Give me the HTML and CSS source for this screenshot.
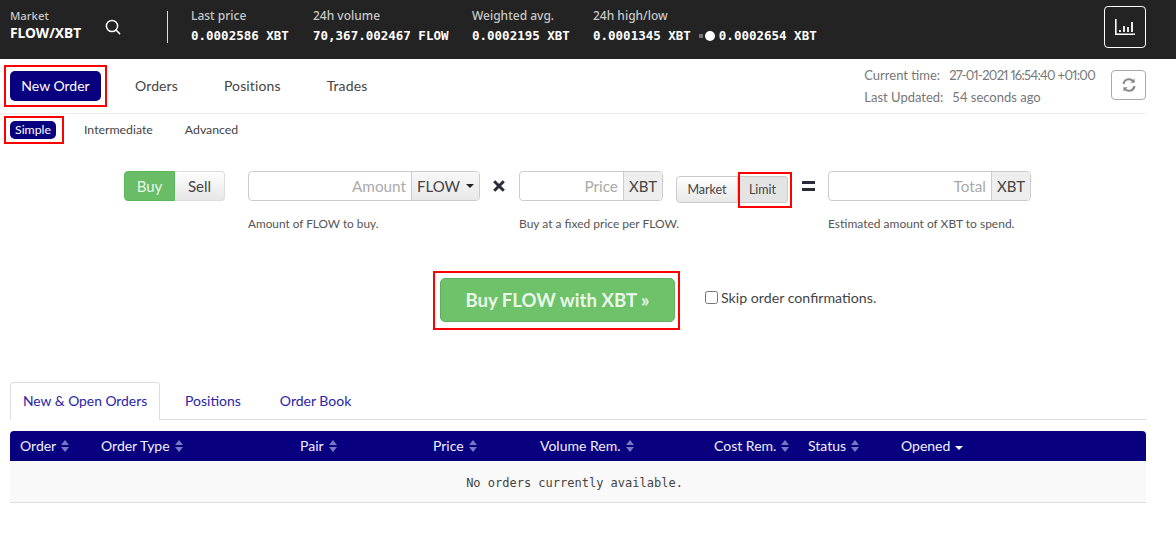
FILE: index.html
```html
<!DOCTYPE html>
<html lang="en">
<head>
<meta charset="utf-8">
<title>FLOW/XBT</title>
<link rel="stylesheet" href="styles.css">
</head>
<body>
<header class="market-bar">
  <div class="stat market-stat">
    <span class="stat-label market-label">Market</span>
    <span class="market-name">FLOW/XBT</span>
  </div>
  <svg class="search-icon" width="16" height="16" viewBox="0 0 16 16" fill="none" stroke="#fff" stroke-width="1.5"><circle cx="7" cy="7" r="5.6"/><path d="M11 11l3.6 3.6" stroke-linecap="round"/></svg>
  <div class="bar-divider"></div>
  <div class="stat w-last"><span class="stat-label">Last price</span><span class="stat-value">0.0002586 XBT</span></div>
  <div class="stat w-volume"><span class="stat-label">24h volume</span><span class="stat-value">70,367.002467 FLOW</span></div>
  <div class="stat w-avg"><span class="stat-label">Weighted avg.</span><span class="stat-value">0.0002195 XBT</span></div>
  <div class="stat"><span class="stat-label">24h high/low</span>
    <span class="stat-value range">0.0001345 XBT<i class="range-track"></i><i class="range-dot"></i>0.0002654 XBT</span>
  </div>
  <button class="chart-btn" aria-label="Chart">
    <svg width="20" height="16" viewBox="0 0 20 16" fill="none" stroke="#fff"><path d="M0.8 0v15.2H20" stroke-width="1.6"/><path d="M5 13v-2M9 13v-6M13 13v-5M17 13v-10" stroke-width="1.8"/></svg>
  </button>
</header>

<nav class="main-nav">
  <a class="main-tab active marked">New Order</a>
  <a class="main-tab">Orders</a>
  <a class="main-tab">Positions</a>
  <a class="main-tab">Trades</a>
  <div class="times">
    <div class="time-line"><span>Current time:</span><span class="time-value">27-01-2021 16:54:40 +01:00</span></div>
    <div class="time-line"><span>Last Updated:</span><span>54 seconds ago</span></div>
  </div>
  <button class="refresh-btn" aria-label="Refresh">
    <svg width="14" height="14" viewBox="0 0 14 14" fill="none" stroke="#888" stroke-width="2"><path d="M1.5 6A5.5 5.5 0 0 1 11.2 3.2"/><path d="M12.5 8A5.5 5.5 0 0 1 2.8 10.8"/><path d="M12.6 0.6v4.2H8.4z" fill="#888" stroke="none"/><path d="M1.4 13.4V9.2h4.2z" fill="#888" stroke="none"/></svg>
  </button>
</nav>

<div class="sub-nav">
  <a class="sub-tab active marked-sm">Simple</a>
  <a class="sub-tab">Intermediate</a>
  <a class="sub-tab">Advanced</a>
</div>

<section class="order-form">
  <div class="field-side">
    <div class="seg">
      <span class="seg-btn buy">Buy</span><span class="seg-btn sell">Sell</span>
    </div>
  </div>
  <div class="field f-amount">
    <div class="input-group"><span class="input">Amount</span><span class="addon dropdown">FLOW<i class="caret"></i></span></div>
    <p class="help">Amount of FLOW to buy.</p>
  </div>
  <svg class="times-op" width="12" height="12" viewBox="0 0 12 12" stroke="#2a2a3a" stroke-width="3"><path d="M1.2 1.2l9.6 9.6M10.8 1.2l-9.6 9.6"/></svg>
  <div class="field f-price">
    <div class="input-group"><span class="input">Price</span><span class="addon">XBT</span></div>
    <p class="help">Buy at a fixed price per FLOW.</p>
  </div>
  <div class="seg order-kind">
    <span class="kind-btn">Market</span><span class="kind-btn on">Limit</span>
  </div>
  <div class="equals"></div>
  <div class="field f-total">
    <div class="input-group"><span class="input">Total</span><span class="addon">XBT</span></div>
    <p class="help">Estimated amount of XBT to spend.</p>
  </div>
</section>

<section class="submit-row">
  <button class="submit-btn">Buy FLOW with XBT »</button>
  <label class="skip"><input type="checkbox">Skip order confirmations.</label>
</section>

<section class="orders">
  <div class="tabs">
    <a class="tab active">New &amp; Open Orders</a>
    <a class="tab">Positions</a>
    <a class="tab">Order Book</a>
  </div>
  <div class="grid-table">
    <div class="thead">
      <span class="th">Order<i class="sort"></i></span>
      <span class="th">Order Type<i class="sort"></i></span>
      <span class="th">Pair<i class="sort"></i></span>
      <span class="th">Price<i class="sort"></i></span>
      <span class="th">Volume Rem.<i class="sort"></i></span>
      <span class="th">Cost Rem.<i class="sort"></i></span>
      <span class="th">Status<i class="sort"></i></span>
      <span class="th">Opened<i class="sort-down"></i></span>
    </div>
    <div class="empty-row">No orders currently available.</div>
  </div>
</section>
</body>
</html>
```

FILE: styles.css
```css
* { box-sizing: border-box; }
html, body { margin: 0; padding: 0; }
body {
  width: 1176px;
  height: 539px;
  overflow: hidden;
  background: #fff;
  color: #333;
  font-family: "Lato", "Liberation Sans", sans-serif;
  font-size: 14px;
}
a { display: block; }
button { font-family: inherit; padding: 0; cursor: pointer; }

/* Market bar */
.market-bar {
  height: 59px;
  background: #232323;
  color: #fff;
  display: flex;
  align-items: flex-start;
  padding: 9px 30px 0 10px;
}
.stat { display: flex; flex-direction: column; gap: 5px; }
.stat-label {
  font-family: "Noto Sans", sans-serif;
  font-size: 12px;
  line-height: 14px;
  font-weight: 500;
  color: #c8c8c8;
}
.market-stat { width: 95px; gap: 2px; }
.market-label { font-size: 11.3px; }
.market-name { font-family: "Noto Sans", sans-serif; font-weight: 700; font-size: 13.8px; line-height: 16px; }
.stat-value {
  font-family: "DejaVu Sans Mono", monospace;
  font-weight: 700;
  font-size: 12.5px;
  line-height: 16px;
  white-space: pre;
}
.search-icon { flex: none; margin-top: 10px; }
.bar-divider { width: 1px; height: 32px; background: #ddd; margin: 2px 23px 0 46px; flex: none; }
.w-last { width: 122px; }
.w-volume { width: 159px; }
.w-avg { width: 121px; }
.range { display: flex; align-items: center; }
.range-track { width: 4px; height: 4px; background: #777; margin: 0 2px 0 8px; }
.range-dot { width: 10px; height: 10px; border-radius: 50%; background: #fff; margin-right: 4px; }
.chart-btn {
  margin: -3px 0 0 auto;
  width: 42px;
  height: 42px;
  background: transparent;
  border: 1px solid #fff;
  border-radius: 4px;
  display: flex;
  align-items: center;
  justify-content: center;
}

/* Main nav */
.main-nav {
  width: 1146px;
  height: 55px;
  border-bottom: 1px solid #ececf4;
  display: flex;
  align-items: center;
  padding: 0 0 0 10px;
}
.main-tab { font-size: 14px; letter-spacing: 0.12px; color: #444; margin-right: 46px; line-height: 30px; }
.main-tab.active {
  width: 91px;
  height: 30px;
  text-align: center;
  background: #08007f;
  color: #fff;
  border-radius: 5px;
  margin-right: 34px;
  letter-spacing: 0;
}
.marked, .marked-sm, .kind-btn.on, .submit-btn { position: relative; }
.marked::after, .marked-sm::after, .kind-btn.on::after, .submit-btn::after {
  content: "";
  position: absolute;
  border: 2px solid #f00;
  pointer-events: none;
}
.marked::after { inset: -6px; }
.times { margin-left: auto; display: flex; flex-direction: column; gap: 5px; }
.time-line { display: flex; gap: 9px; font-size: 13px; line-height: 17px; color: #777; }
.time-value { font-variant-numeric: proportional-nums; letter-spacing: -0.7px; }
.refresh-btn {
  width: 35px;
  height: 30px;
  margin-left: 16px;
  margin-top: -2px;
  background: #fff;
  border: 1px solid #aaa;
  border-radius: 4px;
  display: flex;
  align-items: center;
  justify-content: center;
}

/* Sub nav */
.sub-nav {
  display: flex;
  align-items: center;
  padding: 7px 0 0 10px;
  height: 25px;
}
.sub-tab { font-size: 12.3px; color: #444; line-height: 18px; margin-right: 32px; }
.sub-tab.active { background: #08007f; color: #fff; width: 46px; text-align: center; border-radius: 5px; margin-right: 28px; }
.marked-sm::after { inset: -5px -8px -5px -6px; }

/* Order form */
.order-form {
  display: flex;
  align-items: flex-start;
  margin-top: 32px;
  padding-left: 124px;
  height: 61px;
}
.field-side { width: 124px; }
.seg { display: flex; }
.seg-btn {
  height: 30px;
  line-height: 28px;
  text-align: center;
  font-size: 15px;
  border: 1px solid #ddd;
}
.buy { width: 51px; background: #68bd66; border-color: #5cb85c; color: #e9f6e8; border-radius: 4px 0 0 4px; }
.sell { width: 50px; background: linear-gradient(#fff, #e6e6e6); border-left: 0; color: #444; border-radius: 0 4px 4px 0; }
.field { flex: none; }
.f-amount { width: 232px; }
.f-price { width: 144px; }
.f-total { width: 203px; }
.input-group {
  display: flex;
  height: 30px;
  border: 1px solid #ccc;
  border-radius: 4px;
  overflow: hidden;
}
.input {
  flex: 1;
  text-align: right;
  padding-right: 5px;
  font-size: 15.3px;
  line-height: 28px;
  color: #aaa;
}
.addon {
  background: #eee;
  border-left: 1px solid #ccc;
  padding: 0 5px;
  font-size: 15px;
  line-height: 28px;
  color: #444;
}
.dropdown { display: flex; align-items: center; gap: 6px; width: 68px; background: linear-gradient(#f8f8f8, #e8e8e8); }
.caret { width: 0; height: 0; border: 4px solid transparent; border-top-color: #222; border-bottom: 0; }
.help { margin: 15px 0 0; font-size: 12px; line-height: 16px; color: #555; white-space: nowrap; }
.f-amount .help { font-size: 11.8px; }
.times-op { flex: none; margin: 9px 14px 0 13px; }
.order-kind { margin: 5px 0 0 13px; flex: none; }
.kind-btn {
  height: 27px;
  line-height: 25px;
  font-size: 12.5px;
  text-align: center;
  color: #444;
  border: 1px solid #ccc;
}
.kind-btn:first-child { width: 62px; border-radius: 4px 0 0 4px; background: linear-gradient(#fff, #e8e8e8); }
.kind-btn.on { width: 50px; border-radius: 0 4px 4px 0; border-left: 0; background: #e4e4e4; }
.kind-btn.on::after { inset: -5px -5px -6px 0; }
.equals { flex: none; width: 13px; height: 10px; border-top: 3px solid #2a2a3a; border-bottom: 3px solid #2a2a3a; margin: 10px 13px 0 14px; }

/* Submit */
.submit-row { display: flex; align-items: center; margin-top: 45px; padding-left: 440px; height: 46px; }
.submit-btn {
  width: 235px;
  height: 44px;
  background: #6dc26a;
  border: 1px solid #62ad60;
  border-radius: 5px;
  color: #eaf7e9;
  font-size: 18.6px;
  font-weight: 700;
}
.submit-btn::after { inset: -8px -6px -9px -8px; }
.skip { display: flex; align-items: center; margin: -6px 0 0 30px; font-size: 14.2px; color: #444; }
.skip input { margin: 0 3px 0 0; width: 13px; height: 13px; }

/* Orders */
.orders { margin: 59px 30px 0 10px; }
.tabs { display: flex; height: 38px; border-bottom: 1px solid #ddd; }
.tab { padding: 0 13px; line-height: 37px; font-size: 14px; color: #2a24a8; margin-right: 13px; }
.tab.active {
  width: 150px;
  height: 38px;
  padding: 0 12px;
  margin-right: 12px;
  border: 1px solid #ddd;
  border-bottom: 0;
  border-radius: 4px 4px 0 0;
  background: #fff;
  font-size: 13.85px;
  line-height: 36px;
  white-space: nowrap;
}
.grid-table { margin-top: 11px; }
.thead {
  display: grid;
  grid-template-columns: 81px 199px 133px 107px 174px 94px 93px 255px;
  height: 30px;
  background: #08007f;
  border-radius: 4px 4px 0 0;
}
.th { padding-left: 10px; color: #f0f0ff; font-size: 14px; line-height: 30px; display: flex; align-items: center; }
.sort, .sort-down { display: inline-block; margin-left: 5px; }
.sort { width: 8px; height: 12px; display: flex; flex-direction: column; justify-content: space-between; }
.sort::before, .sort::after {
  content: "";
  width: 0;
  height: 0;
  border-left: 4px solid transparent;
  border-right: 4px solid transparent;
}
.sort::before { border-bottom: 5px solid #7a78c4; }
.sort::after { border-top: 5px solid #7a78c4; }
.sort-down { width: 0; height: 0; border: 4px solid transparent; border-top-color: #fff; border-bottom: 0; margin-top: 3px; }
.empty-row {
  height: 42px;
  padding-right: 7px;
  background: #f9f9f9;
  border-bottom: 1px solid #ddd;
  text-align: center;
  font-family: "DejaVu Sans Mono", monospace;
  font-size: 12px;
  line-height: 44px;
  color: #444;
}
```
